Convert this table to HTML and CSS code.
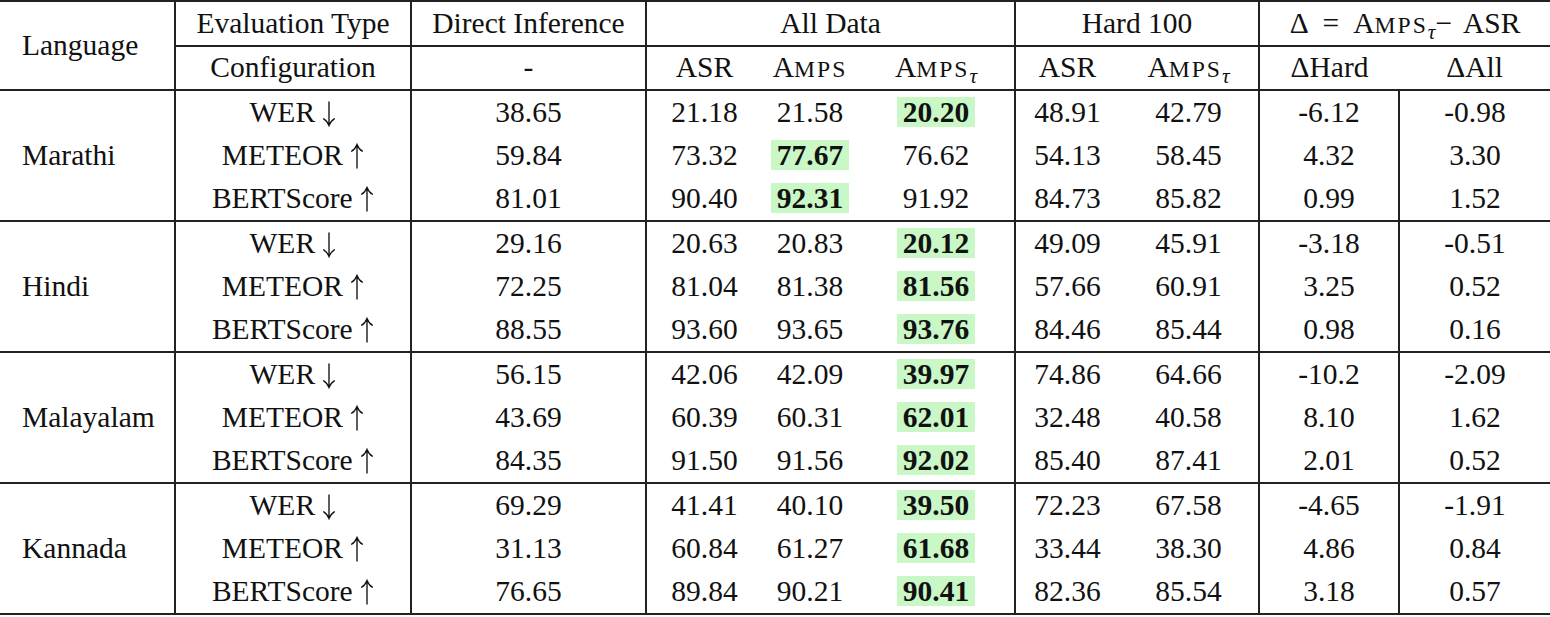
FILE: index.html
```html
<!DOCTYPE html>
<html lang="en">
<head>
  <meta charset="UTF-8" />
  <title>Results</title>
  <link rel="stylesheet" href="styles.css">
</head>
<body>
  <svg width="0" height="0" class="defs">
    <symbol id="arrow-down" viewBox="0 0 14 28">
      <path d="M7 2 V26 M1.5 19.5 Q5 21.5 7 26.5 Q9 21.5 12.5 19.5" fill="none" stroke="#111" stroke-width="1.4" stroke-linecap="round"/>
    </symbol>
    <symbol id="arrow-up" viewBox="0 0 14 28">
      <path d="M7 26 V2 M1.5 8.5 Q5 6.5 7 1.5 Q9 6.5 12.5 8.5" fill="none" stroke="#111" stroke-width="1.4" stroke-linecap="round"/>
    </symbol>
  </svg>

  <table class="results">
    <colgroup>
      <col style="width:175px"><col style="width:236px"><col style="width:235px">
      <col style="width:116px"><col style="width:96px"><col style="width:157px">
      <col style="width:104px"><col style="width:140px">
      <col style="width:140px"><col style="width:151px">
    </colgroup>
    <thead>
      <tr class="head-top">
        <th rowspan="2" class="lang">Language</th>
        <th class="bl">Evaluation Type</th>
        <th class="bl">Direct Inference</th>
        <th colspan="3" class="bl">All Data</th>
        <th colspan="2" class="bl">Hard 100</th>
        <th colspan="2" class="bl">&Delta;<span class="op">=</span>A<span class="sc">MPS</span><sub>&tau;</sub><span class="op minus">&minus;</span>ASR</th>
      </tr>
      <tr class="head-sub">
        <th class="bl">Configuration</th>
        <th class="bl">-</th>
        <th class="bl">ASR</th>
        <th>A<span class="sc">MPS</span></th>
        <th>A<span class="sc">MPS</span><sub>&tau;</sub></th>
        <th class="bl">ASR</th>
        <th>A<span class="sc">MPS</span><sub>&tau;</sub></th>
        <th class="bl">&Delta;Hard</th>
        <th>&Delta;All</th>
      </tr>
    </thead>
    <tbody class="group">
      <tr>
        <td rowspan="3" class="lang">Marathi</td>
        <td class="bl">WER <svg class="arr"><use href="#arrow-down"/></svg></td><td class="bl">38.65</td>
        <td class="bl">21.18</td><td>21.58</td><td><span class="best">20.20</span></td>
        <td class="bl">48.91</td><td>42.79</td>
        <td class="bl">-6.12</td><td class="bl">-0.98</td>
      </tr>
      <tr>
        <td class="bl">METEOR <svg class="arr"><use href="#arrow-up"/></svg></td><td class="bl">59.84</td>
        <td class="bl">73.32</td><td><span class="best">77.67</span></td><td>76.62</td>
        <td class="bl">54.13</td><td>58.45</td>
        <td class="bl">4.32</td><td class="bl">3.30</td>
      </tr>
      <tr>
        <td class="bl">BERTScore <svg class="arr"><use href="#arrow-up"/></svg></td><td class="bl">81.01</td>
        <td class="bl">90.40</td><td><span class="best">92.31</span></td><td>91.92</td>
        <td class="bl">84.73</td><td>85.82</td>
        <td class="bl">0.99</td><td class="bl">1.52</td>
      </tr>
    </tbody>
    <tbody class="group">
      <tr>
        <td rowspan="3" class="lang">Hindi</td>
        <td class="bl">WER <svg class="arr"><use href="#arrow-down"/></svg></td><td class="bl">29.16</td>
        <td class="bl">20.63</td><td>20.83</td><td><span class="best">20.12</span></td>
        <td class="bl">49.09</td><td>45.91</td>
        <td class="bl">-3.18</td><td class="bl">-0.51</td>
      </tr>
      <tr>
        <td class="bl">METEOR <svg class="arr"><use href="#arrow-up"/></svg></td><td class="bl">72.25</td>
        <td class="bl">81.04</td><td>81.38</td><td><span class="best">81.56</span></td>
        <td class="bl">57.66</td><td>60.91</td>
        <td class="bl">3.25</td><td class="bl">0.52</td>
      </tr>
      <tr>
        <td class="bl">BERTScore <svg class="arr"><use href="#arrow-up"/></svg></td><td class="bl">88.55</td>
        <td class="bl">93.60</td><td>93.65</td><td><span class="best">93.76</span></td>
        <td class="bl">84.46</td><td>85.44</td>
        <td class="bl">0.98</td><td class="bl">0.16</td>
      </tr>
    </tbody>
    <tbody class="group">
      <tr>
        <td rowspan="3" class="lang">Malayalam</td>
        <td class="bl">WER <svg class="arr"><use href="#arrow-down"/></svg></td><td class="bl">56.15</td>
        <td class="bl">42.06</td><td>42.09</td><td><span class="best">39.97</span></td>
        <td class="bl">74.86</td><td>64.66</td>
        <td class="bl">-10.2</td><td class="bl">-2.09</td>
      </tr>
      <tr>
        <td class="bl">METEOR <svg class="arr"><use href="#arrow-up"/></svg></td><td class="bl">43.69</td>
        <td class="bl">60.39</td><td>60.31</td><td><span class="best">62.01</span></td>
        <td class="bl">32.48</td><td>40.58</td>
        <td class="bl">8.10</td><td class="bl">1.62</td>
      </tr>
      <tr>
        <td class="bl">BERTScore <svg class="arr"><use href="#arrow-up"/></svg></td><td class="bl">84.35</td>
        <td class="bl">91.50</td><td>91.56</td><td><span class="best">92.02</span></td>
        <td class="bl">85.40</td><td>87.41</td>
        <td class="bl">2.01</td><td class="bl">0.52</td>
      </tr>
    </tbody>
    <tbody class="group">
      <tr>
        <td rowspan="3" class="lang">Kannada</td>
        <td class="bl">WER <svg class="arr"><use href="#arrow-down"/></svg></td><td class="bl">69.29</td>
        <td class="bl">41.41</td><td>40.10</td><td><span class="best">39.50</span></td>
        <td class="bl">72.23</td><td>67.58</td>
        <td class="bl">-4.65</td><td class="bl">-1.91</td>
      </tr>
      <tr>
        <td class="bl">METEOR <svg class="arr"><use href="#arrow-up"/></svg></td><td class="bl">31.13</td>
        <td class="bl">60.84</td><td>61.27</td><td><span class="best">61.68</span></td>
        <td class="bl">33.44</td><td>38.30</td>
        <td class="bl">4.86</td><td class="bl">0.84</td>
      </tr>
      <tr>
        <td class="bl">BERTScore <svg class="arr"><use href="#arrow-up"/></svg></td><td class="bl">76.65</td>
        <td class="bl">89.84</td><td>90.21</td><td><span class="best">90.41</span></td>
        <td class="bl">82.36</td><td>85.54</td>
        <td class="bl">3.18</td><td class="bl">0.57</td>
      </tr>
    </tbody>
  </table>
</body>
</html>
```

FILE: styles.css
```css
html, body {
  margin: 0;
  padding: 0;
  background-color: #fff;
  color: #111;
  font-family: "Liberation Serif", "Times New Roman", serif;
}

.defs {
  position: absolute;
}

.results {
  width: 1550px;
  table-layout: fixed;
  border-collapse: collapse;
  font-size: 29.5px;
  border-top: 2px solid #222;
}

.results th,
.results td {
  padding: 0;
  text-align: center;
  font-weight: normal;
  white-space: nowrap;
  line-height: 1;
}

.head-top th {
  height: 43px;
}

.head-top th.bl {
  border-bottom: 2px solid #222;
}

.head-sub th,
.results th.lang {
  height: 42px;
  border-bottom: 2px solid #222;
}

.results tbody td {
  height: 43px;
}

.group {
  border-bottom: 2px solid #222;
}

.results .lang {
  text-align: left;
  padding-left: 22px;
}

.bl {
  border-left: 2px solid #222;
}

.sc {
  font-size: 0.8em;
  letter-spacing: 2px;
}

.op {
  margin: 0 14px;
}

.op.minus {
  margin: 0 11px 0 0;
}

sub {
  font-style: italic;
  font-size: 0.72em;
  line-height: 0;
  vertical-align: -0.3em;
}

.arr {
  width: 14px;
  height: 27px;
  vertical-align: -5px;
}

.best {
  display: inline-block;
  padding: 1px 6px;
  line-height: 28px;
  font-weight: bold;
  background-color: #c9f7c6;
}
```
